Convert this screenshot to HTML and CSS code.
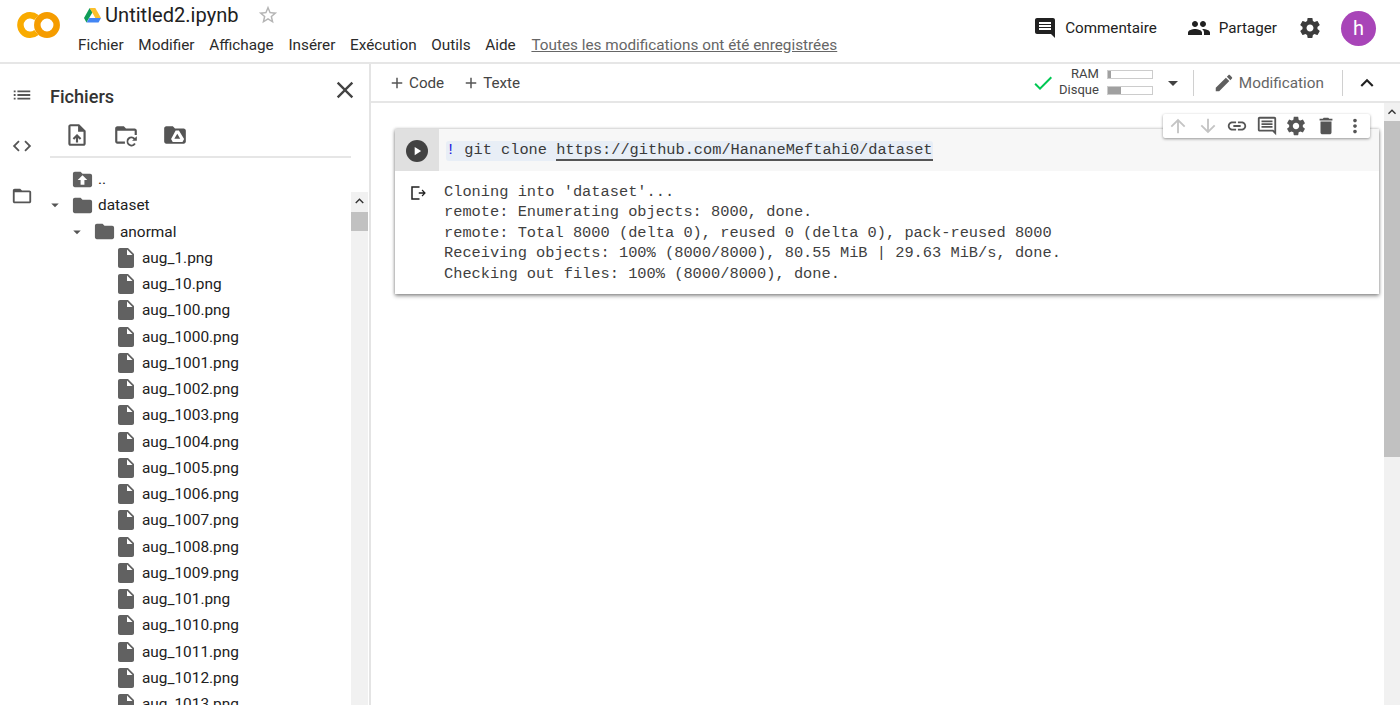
FILE: index.html
```html
<!DOCTYPE html>
<html lang="fr">
<head>
<meta charset="utf-8">
<title>Untitled2.ipynb</title>
<link rel="stylesheet" href="styles.css">
</head>
<body>
<svg class="sprite" width="0" height="0" aria-hidden="true">
  <symbol id="i-list" viewBox="0 0 24 24"><path d="M3 13h2v-2H3v2zm0 4h2v-2H3v2zm0-8h2V7H3v2zm4 4h14v-2H7v2zm0 4h14v-2H7v2zM7 7v2h14V7H7z"/></symbol>
  <symbol id="i-code" viewBox="0 0 24 24"><path d="M9.4 16.6L4.8 12l4.6-4.6L8 6l-6 6 6 6 1.4-1.4zm5.2 0l4.6-4.6-4.6-4.6L16 6l6 6-6 6-1.4-1.4z"/></symbol>
  <symbol id="i-folder-o" viewBox="0 0 24 24"><path d="M20 6h-8l-2-2H4c-1.1 0-1.99.9-1.99 2L2 18c0 1.1.9 2 2 2h16c1.1 0 2-.9 2-2V8c0-1.1-.9-2-2-2zm0 12H4V8h16v10z"/></symbol>
  <symbol id="i-close" viewBox="0 0 24 24"><path d="M19 6.41L17.59 5 12 10.59 6.41 5 5 6.41 10.59 12 5 17.59 6.41 19 12 13.41 17.59 19 19 17.59 13.41 12z"/></symbol>
  <symbol id="i-folder" viewBox="0 0 24 24"><path d="M10 4H4c-1.1 0-1.99.9-1.99 2L2 18c0 1.1.9 2 2 2h16c1.1 0 2-.9 2-2V8c0-1.1-.9-2-2-2h-8l-2-2z"/></symbol>
  <symbol id="i-file" viewBox="0 0 24 24"><path d="M6 2c-1.1 0-1.99.9-1.99 2L4 20c0 1.1.89 2 1.99 2H18c1.1 0 2-.9 2-2V8l-6-6H6zm7 7V3.5L18.5 9H13z"/></symbol>
  <symbol id="i-comment" viewBox="0 0 24 24"><path d="M21.99 4c0-1.1-.89-2-1.99-2H4c-1.1 0-2 .9-2 2v12c0 1.1.9 2 2 2h14l4 4-.01-18zM18 14H6v-2h12v2zm0-3H6V9h12v2zm0-3H6V6h12v2z"/></symbol>
  <symbol id="i-comment-o" viewBox="0 0 24 24"><path d="M21.99 4c0-1.1-.89-2-1.99-2H4c-1.1 0-2 .9-2 2v12c0 1.1.9 2 2 2h14l4 4-.01-18zM20 4v13.17L18.83 16H4V4h16zM6 12h12v2H6zm0-3h12v2H6zm0-3h12v2H6z"/></symbol>
  <symbol id="i-people" viewBox="0 0 24 24"><path d="M16 11c1.66 0 2.99-1.34 2.99-3S17.66 5 16 5c-1.66 0-3 1.34-3 3s1.34 3 3 3zm-8 0c1.66 0 2.99-1.34 2.99-3S9.66 5 8 5C6.34 5 5 6.34 5 8s1.34 3 3 3zm0 2c-2.33 0-7 1.17-7 3.5V19h14v-2.5c0-2.33-4.67-3.5-7-3.5zm8 0c-.29 0-.62.02-.97.05 1.16.84 1.97 1.97 1.97 3.45V19h6v-2.5c0-2.33-4.67-3.5-7-3.5z"/></symbol>
  <symbol id="i-gear" viewBox="0 0 24 24"><path d="M19.43 12.98c.04-.32.07-.64.07-.98s-.03-.66-.07-.98l2.11-1.65c.19-.15.24-.42.12-.64l-2-3.46c-.12-.22-.39-.3-.61-.22l-2.49 1c-.52-.4-1.08-.73-1.69-.98l-.38-2.65C14.46 2.18 14.25 2 14 2h-4c-.25 0-.46.18-.49.42l-.38 2.65c-.61.25-1.17.59-1.69.98l-2.49-1c-.23-.09-.49 0-.61.22l-2 3.46c-.13.22-.07.49.12.64l2.11 1.65c-.04.32-.07.65-.07.98s.03.66.07.98l-2.11 1.65c-.19.15-.24.42-.12.64l2 3.46c.12.22.39.3.61.22l2.49-1c.52.4 1.08.73 1.69.98l.38 2.65c.03.24.24.42.49.42h4c.25 0 .46-.18.49-.42l.38-2.65c.61-.25 1.17-.59 1.69-.98l2.49 1c.23.09.49 0 .61-.22l2-3.46c.12-.22.07-.49-.12-.64l-2.11-1.65zM12 15.5c-1.93 0-3.5-1.57-3.5-3.5s1.57-3.5 3.5-3.5 3.5 1.57 3.5 3.5-1.57 3.5-3.5 3.5z"/></symbol>
  <symbol id="i-edit" viewBox="0 0 24 24"><path d="M3 17.25V21h3.75L17.81 9.94l-3.75-3.75L3 17.25zM20.71 7.04c.39-.39.39-1.02 0-1.41l-2.34-2.34c-.39-.39-1.02-.39-1.41 0l-1.83 1.83 3.75 3.75 1.83-1.83z"/></symbol>
  <symbol id="i-delete" viewBox="0 0 24 24"><path d="M6 19c0 1.1.9 2 2 2h8c1.1 0 2-.9 2-2V7H6v12zM19 4h-3.5l-1-1h-5l-1 1H5v2h14V4z"/></symbol>
  <symbol id="i-link" viewBox="0 0 24 24"><path d="M3.9 12c0-1.71 1.39-3.1 3.1-3.1h4V7H7c-2.76 0-5 2.24-5 5s2.24 5 5 5h4v-1.9H7c-1.71 0-3.1-1.39-3.1-3.1zM8 13h8v-2H8v2zm9-6h-4v1.9h4c1.71 0 3.1 1.39 3.1 3.1s-1.39 3.1-3.1 3.1h-4V17h4c2.76 0 5-2.24 5-5s-2.24-5-5-5z"/></symbol>
  <symbol id="i-more" viewBox="0 0 24 24"><path d="M12 8c1.1 0 2-.9 2-2s-.9-2-2-2-2 .9-2 2 .9 2 2 2zm0 2c-1.1 0-2 .9-2 2s.9 2 2 2 2-.9 2-2-.9-2-2-2zm0 6c-1.1 0-2 .9-2 2s.9 2 2 2 2-.9 2-2-.9-2-2-2z"/></symbol>
  <symbol id="i-up" viewBox="0 0 24 24"><path d="M4 12l1.41 1.41L11 7.83V20h2V7.83l5.58 5.59L20 12l-8-8-8 8z"/></symbol>
  <symbol id="i-down" viewBox="0 0 24 24"><path d="M20 12l-1.41-1.41L13 16.17V4h-2v12.17l-5.58-5.59L4 12l8 8 8-8z"/></symbol>
  <symbol id="i-check" viewBox="0 0 24 24"><path d="M9 16.17L4.83 12l-1.42 1.41L9 19 21 7l-1.41-1.41z"/></symbol>
  <symbol id="i-chev" viewBox="0 0 24 24"><path d="M12 8l-6 6 1.41 1.41L12 10.83l4.59 4.58L18 14z"/></symbol>
  <symbol id="i-caret" viewBox="0 0 24 24"><path d="M7 10l5 5 5-5z"/></symbol>
  <symbol id="i-star" viewBox="0 0 24 24"><path d="M22 9.24l-7.19-.62L12 2 9.19 8.63 2 9.24l5.46 4.73L5.82 21 12 17.27 18.18 21l-1.63-7.03L22 9.24zM12 15.4l-3.76 2.27 1-4.28-3.32-2.88 4.38-.38L12 6.1l1.71 4.04 4.38.38-3.32 2.88 1 4.28L12 15.4z"/></symbol>
  <symbol id="i-plus" viewBox="0 0 24 24"><path d="M19 13h-6v6h-2v-6H5v-2h6V5h2v6h6v2z"/></symbol>
  <symbol id="i-upload" viewBox="0 0 24 24"><path d="M14 2H6c-1.1 0-1.99.9-1.99 2L4 20c0 1.1.89 2 1.99 2H18c1.1 0 2-.9 2-2V8l-6-6zm4 18H6V4h7v5h5v11zM8 15.01l1.41 1.41L11 14.84V19h2v-4.16l1.59 1.59L16 15.01 12.01 11 8 15.01z"/></symbol>
  <symbol id="i-folder-sync" viewBox="0 0 24 24"><path d="M4 4h6l2 2h8c1.1 0 2 .9 2 2v4h-2V8H4v10h7v2H4c-1.1 0-2-.9-2-2V6c0-1.1.9-2 2-2z"/><path d="M21.6 13.4l-1.3 1.3A4.5 4.5 0 0 0 12.6 18a4.5 4.5 0 0 0 8.4 2.2l-1.5-.9a2.8 2.8 0 1 1-.5-3.4L17.6 17.3H22v-3.9z"/></symbol>
  <symbol id="i-folder-drive" viewBox="0 0 24 24"><path fill-rule="evenodd" d="M10 4H4c-1.1 0-2 .9-2 2v12c0 1.1.9 2 2 2h16c1.1 0 2-.9 2-2V8c0-1.1-.9-2-2-2h-8l-2-2zm2.6 3.8h3l4.8 8-1.5 2.6h-9l-1.5-2.6zM14.1 10.8l-2.7 4.7h5.4z"/></symbol>
  <symbol id="i-folder-up" viewBox="0 0 24 24"><path fill-rule="evenodd" d="M10 4H4c-1.1 0-2 .9-2 2v12c0 1.1.9 2 2 2h16c1.1 0 2-.9 2-2V8c0-1.1-.9-2-2-2h-8l-2-2zm2 3.5l5 5h-3v5h-4v-5H7l5-5z"/></symbol>
  <symbol id="i-output" viewBox="0 0 24 24"><path d="M3 3h11v2H5v14h9v2H3V3z"/><path d="M13 11h6.2l-2.4-2.4 1.2-1.2 4.4 4.6-4.4 4.6-1.2-1.2 2.4-2.4H13v-2z"/></symbol>
</svg>

<header class="topbar">
  <svg class="logo" viewBox="0 0 44 26" aria-label="Colab">
    <path class="logo-c" d="M19.4 5.6A9.7 9.7 0 1 0 19.4 20.4"/>
    <circle class="logo-o" cx="30" cy="13" r="9.7"/>
  </svg>
  <div class="doc">
    <div class="doc-title">
      <svg class="drive" viewBox="0 0 24 21">
        <path fill="#0f9d58" d="M8 0 0 14l3.5 6.5L12 6z"/>
        <path fill="#fbc02d" d="M8 0h8l8 14h-8z"/>
        <path fill="#4285f4" d="M3.5 20.5h17L24 14H7.5z"/>
      </svg>
      <span class="doc-name">Untitled2.ipynb</span>
      <svg class="star"><use href="#i-star"/></svg>
    </div>
    <nav class="menu">
      <span>Fichier</span><span>Modifier</span><span>Affichage</span><span>Insérer</span><span>Exécution</span><span>Outils</span><span>Aide</span>
      <span class="saved">Toutes les modifications ont été enregistrées</span>
    </nav>
  </div>
  <div class="actions">
    <span class="action action-comment"><svg class="ic-24"><use href="#i-comment"/></svg>Commentaire</span>
    <span class="action action-share"><svg class="ic-24"><use href="#i-people"/></svg>Partager</span>
    <svg class="ic-24 gear"><use href="#i-gear"/></svg>
    <span class="avatar">h</span>
  </div>
</header>

<div class="workspace">
  <aside class="sidebar">
    <div class="rail">
      <svg class="rail-ic"><use href="#i-list"/></svg>
      <svg class="rail-ic"><use href="#i-code"/></svg>
      <svg class="rail-ic"><use href="#i-folder-o"/></svg>
    </div>
    <div class="panel">
      <div class="panel-head">
        <span class="panel-title">Fichiers</span>
        <svg class="panel-close"><use href="#i-close"/></svg>
      </div>
      <div class="panel-tools">
        <svg class="tool"><use href="#i-upload"/></svg>
        <svg class="tool"><use href="#i-folder-sync"/></svg>
        <svg class="tool"><use href="#i-folder-drive"/></svg>
      </div>
      <div class="row depth-0 parent-row"><svg class="row-folder"><use href="#i-folder-up"/></svg><span>..</span></div>
      <div class="tree-wrap">
        <div class="tree">
          <div class="row depth-0"><svg class="row-caret"><use href="#i-caret"/></svg><svg class="row-folder"><use href="#i-folder"/></svg><span>dataset</span></div>
          <div class="row depth-1"><svg class="row-caret"><use href="#i-caret"/></svg><svg class="row-folder"><use href="#i-folder"/></svg><span>anormal</span></div>
          <div class="row file"><svg class="row-file"><use href="#i-file"/></svg><span>aug_1.png</span></div>
          <div class="row file"><svg class="row-file"><use href="#i-file"/></svg><span>aug_10.png</span></div>
          <div class="row file"><svg class="row-file"><use href="#i-file"/></svg><span>aug_100.png</span></div>
          <div class="row file"><svg class="row-file"><use href="#i-file"/></svg><span>aug_1000.png</span></div>
          <div class="row file"><svg class="row-file"><use href="#i-file"/></svg><span>aug_1001.png</span></div>
          <div class="row file"><svg class="row-file"><use href="#i-file"/></svg><span>aug_1002.png</span></div>
          <div class="row file"><svg class="row-file"><use href="#i-file"/></svg><span>aug_1003.png</span></div>
          <div class="row file"><svg class="row-file"><use href="#i-file"/></svg><span>aug_1004.png</span></div>
          <div class="row file"><svg class="row-file"><use href="#i-file"/></svg><span>aug_1005.png</span></div>
          <div class="row file"><svg class="row-file"><use href="#i-file"/></svg><span>aug_1006.png</span></div>
          <div class="row file"><svg class="row-file"><use href="#i-file"/></svg><span>aug_1007.png</span></div>
          <div class="row file"><svg class="row-file"><use href="#i-file"/></svg><span>aug_1008.png</span></div>
          <div class="row file"><svg class="row-file"><use href="#i-file"/></svg><span>aug_1009.png</span></div>
          <div class="row file"><svg class="row-file"><use href="#i-file"/></svg><span>aug_101.png</span></div>
          <div class="row file"><svg class="row-file"><use href="#i-file"/></svg><span>aug_1010.png</span></div>
          <div class="row file"><svg class="row-file"><use href="#i-file"/></svg><span>aug_1011.png</span></div>
          <div class="row file"><svg class="row-file"><use href="#i-file"/></svg><span>aug_1012.png</span></div>
          <div class="row file"><svg class="row-file"><use href="#i-file"/></svg><span>aug_1013.png</span></div>
        </div>
        <div class="scrollbar side-scroll">
          <svg class="sb-arrow"><use href="#i-chev"/></svg>
          <div class="sb-thumb side-thumb"></div>
        </div>
      </div>
    </div>
  </aside>

  <main class="main">
    <div class="toolbar">
      <span class="add add-code"><svg class="add-ic"><use href="#i-plus"/></svg>Code</span>
      <span class="add"><svg class="add-ic"><use href="#i-plus"/></svg>Texte</span>
      <div class="toolbar-right">
        <svg class="check"><use href="#i-check"/></svg>
        <div class="res">
          <span class="res-label">RAM</span><span class="bar"><i class="fill fill-ram"></i></span>
          <span class="res-label">Disque</span><span class="bar"><i class="fill fill-disk"></i></span>
        </div>
        <svg class="res-caret"><use href="#i-caret"/></svg>
        <span class="vsep"></span>
        <span class="mode"><svg class="mode-ic"><use href="#i-edit"/></svg>Modification</span>
        <span class="vsep vsep-2"></span>
        <svg class="collapse"><use href="#i-chev"/></svg>
      </div>
    </div>
    <div class="notebook">
      <div class="content">
        <section class="cell">
          <div class="cell-input">
            <div class="run"><span class="run-btn"><svg viewBox="0 0 24 24"><path d="M9.5 7.5v9l7-4.5z"/></svg></span></div>
            <div class="code"><span class="code-line"><span class="bang">!</span> git clone <span class="url">https://github.com/HananeMeftahi0/dataset</span></span></div>
          </div>
          <div class="cell-output">
            <svg class="out-ic"><use href="#i-output"/></svg>
            <pre class="out-text">Cloning into 'dataset'...
remote: Enumerating objects: 8000, done.
remote: Total 8000 (delta 0), reused 0 (delta 0), pack-reused 8000
Receiving objects: 100% (8000/8000), 80.55 MiB | 29.63 MiB/s, done.
Checking out files: 100% (8000/8000), done.</pre>
          </div>
          <div class="cell-tools">
            <svg class="ct ct-off"><use href="#i-up"/></svg>
            <svg class="ct ct-off"><use href="#i-down"/></svg>
            <svg class="ct"><use href="#i-link"/></svg>
            <svg class="ct"><use href="#i-comment-o"/></svg>
            <svg class="ct"><use href="#i-gear"/></svg>
            <svg class="ct"><use href="#i-delete"/></svg>
            <svg class="ct"><use href="#i-more"/></svg>
          </div>
        </section>
      </div>
      <div class="scrollbar page-scroll">
        <svg class="sb-arrow"><use href="#i-chev"/></svg>
        <div class="sb-thumb page-thumb"></div>
      </div>
    </div>
  </main>
</div>
</body>
</html>
```

FILE: styles.css
```css
* { box-sizing: border-box; }
html, body { margin: 0; height: 705px; overflow: hidden; }
body {
  display: flex;
  flex-direction: column;
  background: #fff;
  color: #212121;
  font-family: Roboto, "Liberation Sans", sans-serif;
  font-size: 15.3px;
}
svg { display: block; flex: none; fill: currentColor; }
.sprite { position: absolute; }

/* top bar */
.topbar {
  flex: none;
  height: 64px;
  display: flex;
  border-bottom: 2px solid #e6e6e6;
}
.logo { width: 44px; height: 26px; margin: 12px 0 0 17px; fill: none; }
.logo-c { fill: none; stroke: #f9ab00; stroke-width: 6.5; }
.logo-o { fill: none; stroke: #f59c00; stroke-width: 6.5; }
.doc { margin-left: 17px; display: flex; flex-direction: column; }
.doc-title { display: flex; align-items: center; height: 30px; margin-left: 6px; }
.drive { width: 17px; height: 15px; }
.doc-name { margin-left: 4px; font-size: 20.1px; color: #212121; }
.star { width: 22px; height: 22px; margin-left: 18px; color: #b5b5b5; }
.menu { display: flex; gap: 14.7px; height: 30px; align-items: center; color: #2b2b2b; font-size: 15.3px; }
.saved { margin-left: 1px; color: #666; text-decoration: underline; }
.actions { margin-left: auto; display: flex; align-items: center; height: 56px; padding-right: 24px; color: #212121; }
.action { display: flex; align-items: center; gap: 8px; font-size: 15.2px; }
.action-share { margin-left: 30px; }
.ic-24 { width: 24px; height: 24px; }
.gear { margin-left: 21px; color: #3c3c3c; }
.avatar {
  width: 35px; height: 35px; margin-left: 19px;
  border-radius: 50%;
  background: #a845b8;
  color: #fff;
  font-size: 20px;
  display: flex; align-items: center; justify-content: center;
}

/* layout */
.workspace { flex: 1; min-height: 0; display: flex; }

/* sidebar */
.sidebar { flex: none; width: 371px; display: flex; border-right: 2px solid #e4e4e4; }
.rail { flex: none; width: 50px; padding: 20px 0 0 11px; display: flex; flex-direction: column; gap: 28.5px; color: #555; }
.rail-ic { width: 22px; height: 22px; }
.panel { flex: 1; min-width: 0; display: flex; flex-direction: column; padding-right: 1px; }
.panel-head { height: 50px; display: flex; align-items: center; justify-content: space-between; padding: 14px 9px 0 0; }
.panel-title { font-size: 18.1px; font-weight: 500; color: #333; }
.panel-close { width: 28px; height: 28px; align-self: flex-start; margin-top: -2px; color: #444; }
.panel-tools {
  height: 44px;
  margin-right: 17px;
  padding: 8px 0 0 14px;
  display: flex;
  gap: 23px;
  border-bottom: 2px solid #e6e6e6;
  color: #555;
}
.tool { width: 26px; height: 26px; }
.row { height: 26.25px; display: flex; align-items: center; color: #212121; white-space: nowrap; font-size: 15.4px; }
.parent-row { margin-top: 8px; }
.parent-row .row-folder { margin-left: 21px; }
.row-caret { width: 18px; height: 18px; color: #555; }
.row-folder { width: 23px; height: 23px; margin-right: 4px; color: #616161; }
.row-file { width: 24px; height: 24px; margin-right: 4px; color: #616161; }
.depth-0 .row-caret { margin-left: -4px; margin-right: 7px; }
.depth-1 .row-caret { margin-left: 18px; margin-right: 7px; }
.file { padding-left: 64px; }
.tree-wrap { flex: 1; min-height: 0; display: flex; }
.tree { flex: 1; min-width: 0; overflow: hidden; }

/* scrollbars */
.scrollbar { flex: none; background: #f1f1f1; }
.sb-arrow { width: 100%; height: 18px; color: #333; }
.sb-thumb { background: #c1c1c1; }
.side-scroll { width: 17px; }
.side-thumb { height: 19px; margin-top: 2px; }
.page-scroll { width: 16px; }
.page-thumb { height: 336px; }

/* main */
.main { flex: 1; min-width: 0; display: flex; flex-direction: column; }
.toolbar {
  flex: none;
  height: 39px;
  display: flex;
  align-items: center;
  padding-left: 17px;
  gap: 18px;
  border-bottom: 2px solid #e6e6e6;
  color: #444;
  font-size: 15.2px;
}
.add { display: flex; align-items: center; gap: 3px; }
.add-ic { width: 18px; height: 18px; color: #555; }
.toolbar-right { margin-left: auto; display: flex; align-items: center; height: 100%; padding-right: 20px; }
.check { width: 24px; height: 24px; color: #00c853; margin-right: 0; }
.res { display: grid; grid-template-columns: 44px 46px; column-gap: 8px; row-gap: 2px; align-items: center; font-size: 13px; color: #444; margin-top: -1px; }
.res-label { text-align: right; line-height: 14px; }
.bar { display: block; height: 9px; border: 1px solid #ccc; background: #fff; }
.fill { display: block; height: 100%; background: #a0a0a0; }
.fill-ram { width: 3px; }
.fill-disk { width: 13px; }
.res-caret { width: 24px; height: 24px; margin-left: 8px; color: #424242; }
.vsep { width: 1px; height: 26px; background: #d0d0d0; margin-left: 8px; }
.vsep-2 { margin-left: 18px; }
.mode { margin-left: 19px; display: flex; align-items: center; gap: 4px; color: #666; font-size: 15.3px; }
.mode-ic { width: 22px; height: 22px; color: #5f5f5f; }
.collapse { width: 26px; height: 26px; margin-left: 11px; color: #212121; }

/* notebook */
.notebook { flex: 1; min-height: 0; display: flex; }
.content { flex: 1; min-width: 0; padding: 26px 5px 0 24px; }
.cell {
  position: relative;
  background: #fff;
  box-shadow: 0 2px 4px rgba(0,0,0,.4), 0 0 3px rgba(0,0,0,.25);
}
.cell-input { height: 42px; display: flex; background: #f7f7f7; }
.run { flex: none; width: 44px; padding-top: 1px; background: #e0e0e0; display: flex; align-items: center; justify-content: center; }
.run-btn { width: 22px; height: 22px; border-radius: 50%; background: #424242; color: #fff; display: block; }
.code { flex: 1; padding: 12px 0 0 7px; font-family: "Liberation Mono", monospace; font-size: 15.3px; line-height: 18px; color: #3a3a3a; }
.code-line { display: inline-block; background: #e8eef6; border-radius: 3px; white-space: pre; }
.bang { color: #1a1ae0; }
.url { border-bottom: 2px solid #555; display: inline-block; line-height: 18px; }
.cell-output { display: flex; height: 123px; padding-top: 10.5px; }
.out-ic { width: 18px; height: 18px; margin: 2px 0 0 13.5px; color: #212121; }
.out-text {
  margin: 0 0 0 17.5px;
  font-family: "Liberation Mono", monospace;
  font-size: 15.35px;
  line-height: 20.5px;
  color: #3f3f3f;
}
.cell-tools {
  position: absolute;
  top: -15px;
  right: 9px;
  width: 207px;
  height: 24px;
  padding: 0 4px;
  display: flex;
  align-items: center;
  justify-content: space-between;
  background: #fff;
  border-radius: 2px;
  box-shadow: 0 1px 3px rgba(0,0,0,.4);
  color: #555;
}
.ct { width: 22px; height: 22px; }
.ct-off { color: #c4c4c4; }
```
